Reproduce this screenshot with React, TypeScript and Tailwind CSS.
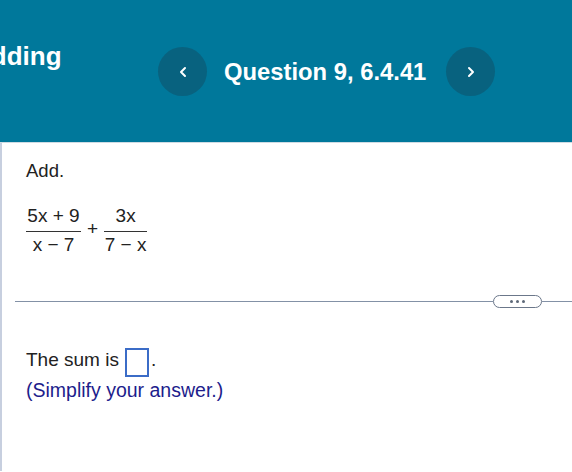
import { ChevronLeft, ChevronRight } from "lucide-react";

// one stacked fraction: numerator over a rule over denominator
function Fraction({ top, bottom, width }: { top: string; bottom: string; width: string }) {
  return (
    <div className={`flex flex-col items-center ${width}`}>
      <div className="leading-[22px] pb-[4px]">{top}</div>
      <div className="h-px w-full bg-[#333]" />
      <div className="leading-[22px] pt-[2px]">{bottom}</div>
    </div>
  );
}

function NavButton({ dir }: { dir: "prev" | "next" }) {
  return (
    <button className="flex h-[49px] w-[49px] items-center justify-center rounded-full bg-[#08627f] text-white">
      {dir === "prev" ? <ChevronLeft size={16} strokeWidth={3} /> : <ChevronRight size={16} strokeWidth={3} />}
    </button>
  );
}

export default function App() {
  return (
    <div className="h-[472px] w-[572px] overflow-hidden bg-white font-['Liberation_Sans',Arial,sans-serif]">
      {/* ----- header ----- */}
      <div className="flex h-[143px] items-start border-b border-[#cfdbe3] bg-[#00789b] text-white">
        <div className="w-[62px] overflow-hidden pt-[40px]">
          <div className="-ml-[28px] whitespace-nowrap text-[26px] font-bold leading-[32px]">Adding</div>
        </div>
        <div className="ml-[96px] flex items-center pt-[47px]">
          <NavButton dir="prev" />
          <div className="ml-[17px] mr-[20px] text-[23.8px] font-bold leading-[30px]">Question 9, 6.4.41</div>
          <NavButton dir="next" />
        </div>
      </div>

      {/* ----- body ----- */}
      <div className="h-[328px] border-l-2 border-[#c7cfdf] pt-[16px]">
        <div className="pl-[24px] text-[18.5px] leading-[24px] text-[#222]">Add.</div>

        <div className="mt-[22px] flex items-center pl-[24px] text-[19px] text-[#222]">
          <Fraction top="5x + 9" bottom="x − 7" width="w-[55px]" />
          <div className="mx-[6px] -mt-[2px]">+</div>
          <Fraction top="3x" bottom="7 − x" width="w-[43px]" />
        </div>

        {/* divider with the more-options pill */}
        <div className="mt-[39px] flex items-center pl-[13px]">
          <div className="h-px flex-1 bg-[#8391a6]" />
          <div className="flex h-[13px] w-[49px] items-center justify-center gap-[3px] rounded-full border border-[#6b778a] bg-white">
            <span className="h-[3px] w-[3px] rounded-full bg-[#5d6878]" />
            <span className="h-[3px] w-[3px] rounded-full bg-[#5d6878]" />
            <span className="h-[3px] w-[3px] rounded-full bg-[#5d6878]" />
          </div>
          <div className="h-px w-[30px] bg-[#8391a6]" />
        </div>

        <div className="mt-[40px] flex items-start pl-[24px] text-[19px] leading-[24px] text-[#222]">
          <span>The sum is</span>
          <span className="ml-[6px] inline-block h-[29px] w-[24px] border-2 border-[#3b6cc7]" />
          <span className="ml-[2px]">.</span>
        </div>
        <div className="pl-[24px] text-[19.5px] leading-[26px] text-[#1d1d8c]">(Simplify your answer.)</div>
      </div>
    </div>
  );
}
